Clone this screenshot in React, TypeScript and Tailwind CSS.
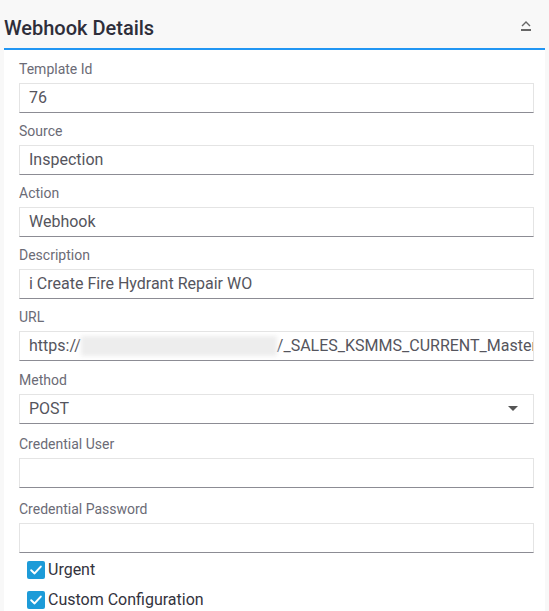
import React from 'react'

const font = { fontFamily: 'Roboto, "Liberation Sans", sans-serif' }

function Field({ label, className = '', children }: { label: string; className?: string; children: React.ReactNode }) {
  return (
    <div className={`flex flex-col ${className}`}>
      <label className="text-[14px] leading-[20px] text-[#6b6b76]">{label}</label>
      <div className="mt-[4px] h-[30px] flex items-center border border-[#e4e4e4] border-b-[#8c8c94] bg-white px-[9px] text-[16px] text-[#55555d] overflow-hidden whitespace-nowrap">
        {children}
      </div>
    </div>
  )
}

function Check({ label }: { label: string }) {
  return (
    <div className="h-[30px] flex items-center gap-[3px] pl-[8px]">
      <span className="w-[18px] h-[18px] rounded-[2px] bg-[#1d9bd8] flex items-center justify-center">
        <svg width="14" height="14" viewBox="0 0 14 14" fill="none">
          <path d="M2.2 7.2 L5.6 10.4 L11.8 3.6" stroke="white" strokeWidth="2" strokeLinecap="round" strokeLinejoin="round" />
        </svg>
      </span>
      <span className="text-[16px] text-[#33333d]">{label}</span>
    </div>
  )
}

export default function App() {
  return (
    <div className="min-h-[611px] bg-[#f8f8f8] px-[4px]" style={font}>
      {/* Header */}
      <div className="h-[50px] flex items-center justify-between border-b-2 border-[#2196f3]">
        <h1 className="text-[20px] font-medium text-[#2e2e3a] pt-[7px]">Webhook Details</h1>
        <svg width="14" height="14" viewBox="0 0 14 14" className="mr-[12px] mt-[4px]">
          <path d="M3 7 L7 3 L11 7" stroke="#666" strokeWidth="1.4" fill="none" />
          <rect x="2" y="10" width="10" height="2" fill="#666" />
        </svg>
      </div>

      {/* Form */}
      <div className="bg-white pl-[15px] pr-[11px] pt-[9px] pb-[4px] flex flex-col gap-[8px]">
        <Field label="Template Id">76</Field>
        <Field label="Source">Inspection</Field>
        <Field label="Action">Webhook</Field>
        <Field label="Description">i Create Fire Hydrant Repair WO</Field>
        <Field label="URL">
          <span className="shrink-0">https://</span>
          <span className="shrink-0 inline-block w-[196px] h-[20px] bg-[#ededed] blur-[2px]" />
          <span className="shrink-0">/_SALES_KSMMS_CURRENT_Master/api/webhook</span>
        </Field>
        <Field label="Method" className="mt-[1px]">
          <span className="flex-1">POST</span>
          <svg width="10" height="6" viewBox="0 0 10 6" className="mr-[6px]">
            <path d="M0 0 L10 0 L5 5 Z" fill="#555" />
          </svg>
        </Field>
        <Field label="Credential User" className="mt-[2px]">{''}</Field>
        <Field label="Credential Password" className="mt-[3px]">{''}</Field>
        <div className="flex flex-col -mt-[6px]">
          <Check label="Urgent" />
          <Check label="Custom Configuration" />
        </div>
      </div>
    </div>
  )
}
